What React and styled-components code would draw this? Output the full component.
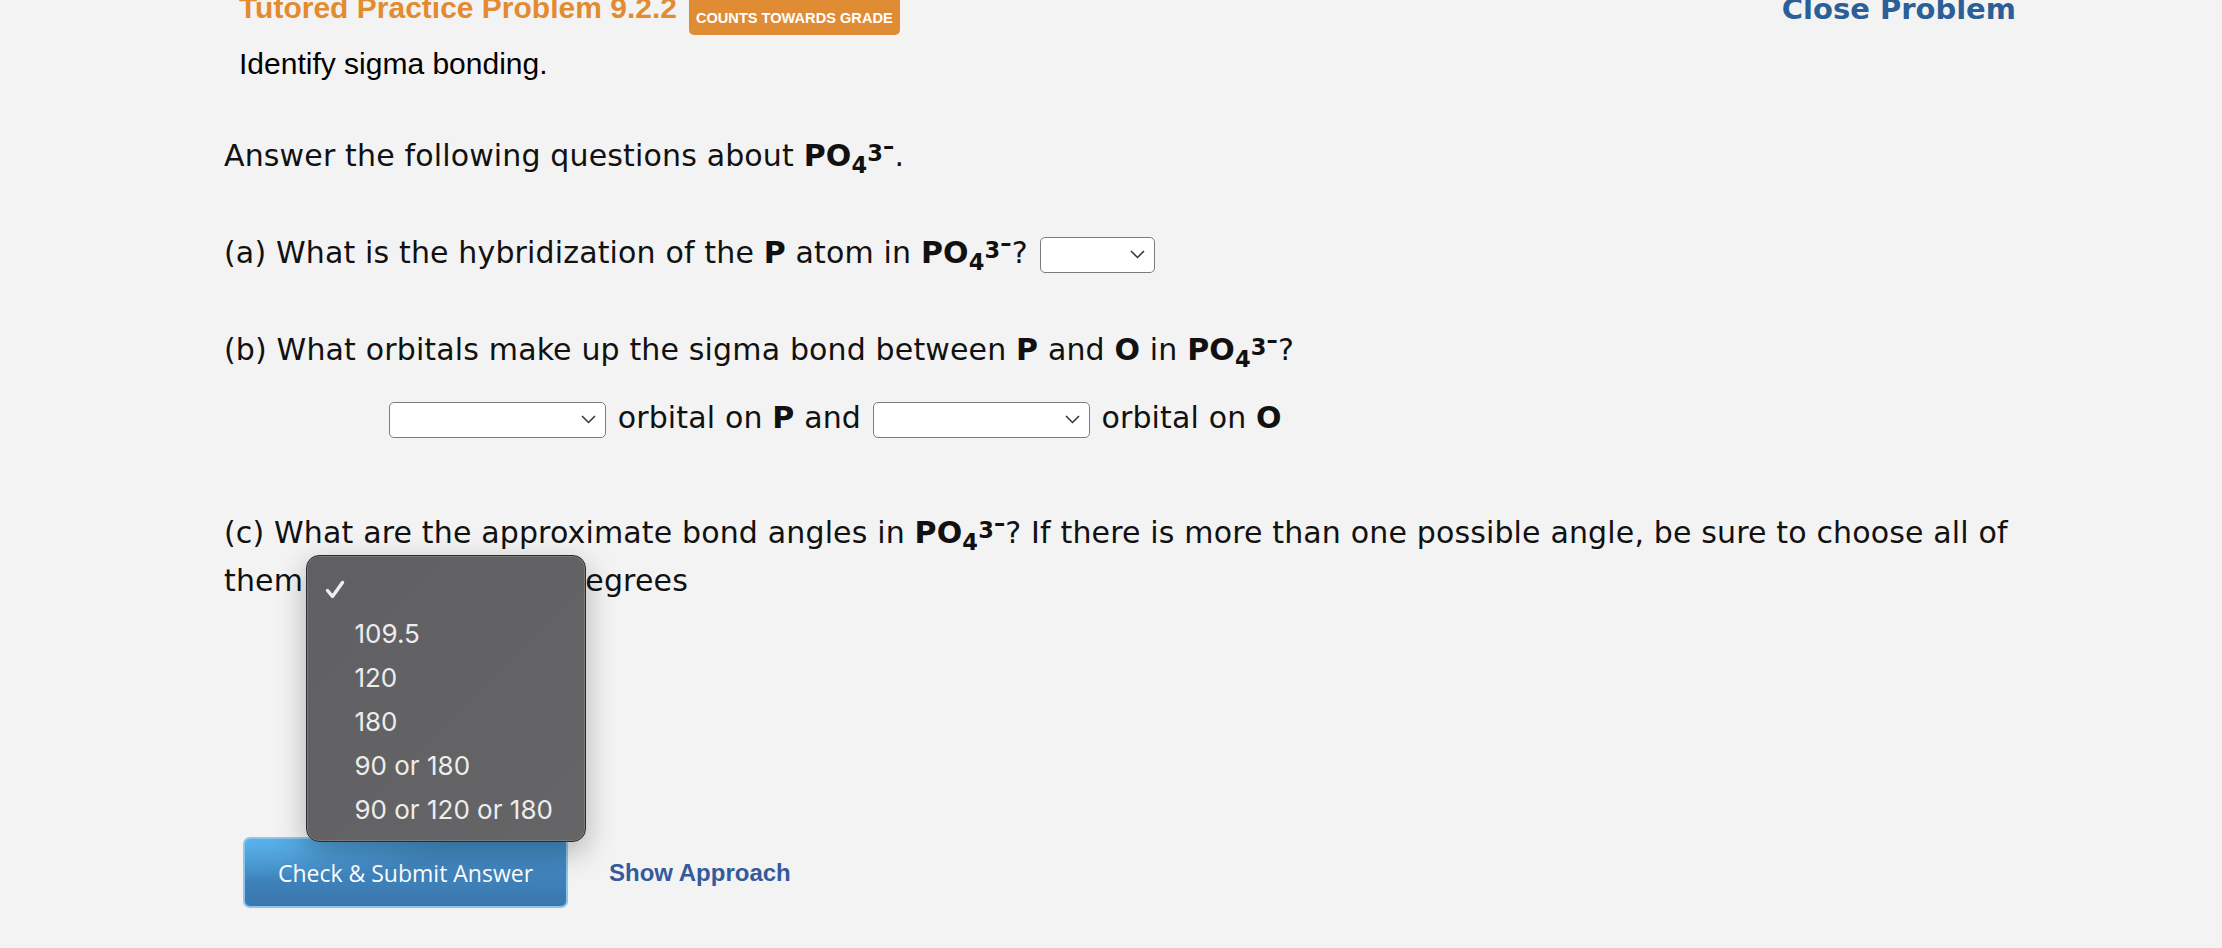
import styled, { createGlobalStyle } from "styled-components";

const GlobalStyle = createGlobalStyle`
  html, body {
    margin: 0;
    padding: 0;
    background: #f3f3f3;
    overflow: hidden;
  }
`;

const Page = styled.div`
  width: 1792px;
  height: 948px;
  padding-left: 224px;
  font-family: "DejaVu Sans", Verdana, sans-serif;
  color: #111;
`;

const Header = styled.header`
  display: flex;
  align-items: flex-start;
  height: 36px;
  padding-left: 15px;
`;

const Title = styled.h1`
  margin: -7px 0 0;
  font: bold 30px/30px "Liberation Sans", Arial, sans-serif;
  color: #e38b31;
`;

const Badge = styled.span`
  display: flex;
  align-items: center;
  height: 35px;
  margin-left: 12px;
  padding: 0 7px;
  background: #e08c35;
  border-radius: 0 0 5px 5px;
  color: #fff;
  font: bold 14.6px "Liberation Sans", Arial, sans-serif;
  text-transform: uppercase;
`;

const CloseLink = styled.a`
  margin-left: auto;
  margin-top: -4px;
  font: bold 29px/26px "DejaVu Sans", Verdana, sans-serif;
  color: #2b5f97;
  text-decoration: none;
`;

const Intro = styled.p`
  margin: 13px 0 0 15px;
  font: 30px/30px "Liberation Sans", Arial, sans-serif;
  color: #000;
`;

const Question = styled.p`
  margin: ${(p) => p.$gap}px 0 0;
  padding-left: ${(p) => p.$indent || 0}px;
  font-size: 30px;
  line-height: 48px;
  letter-spacing: 0.15px;
  white-space: nowrap;
`;

const Sub = styled.sub`
  font-size: 0.75em;
  vertical-align: baseline;
  position: relative;
  top: 0.3em;
  line-height: 0;
`;

const Sup = styled.sup`
  font-size: 0.75em;
  vertical-align: baseline;
  position: relative;
  top: -0.22em;
  line-height: 0;
`;

const Raised = styled.span`
  position: relative;
  top: -0.3em;
`;

const Dropdown = styled.span`
  position: relative;
  display: inline-flex;
  align-items: center;
  justify-content: flex-end;
  box-sizing: border-box;
  width: ${(p) => p.$w}px;
  height: 36px;
  margin: 0 2px;
  padding-right: 9px;
  background: #fff;
  border: 1.5px solid #7b7b7b;
  border-radius: 5px;
  vertical-align: middle;
  letter-spacing: 0;
`;

const Menu = styled.div`
  position: absolute;
  top: -11px;
  left: -19px;
  z-index: 10;
  box-sizing: border-box;
  width: 280px;
  padding: 12px 0 9px;
  background: linear-gradient(135deg, #606062, #656567);
  border: 1px solid #2c2c2e;
  border-radius: 13px;
  box-shadow: inset 0 0 0 1px rgba(255, 255, 255, 0.14), 0 10px 30px rgba(0, 0, 0, 0.28);
  font: 26px/44px Inter, "Noto Sans", sans-serif;
  color: #ededed;
  white-space: nowrap;
`;

const MenuItem = styled.div`
  display: grid;
  grid-template-columns: 47px 1fr;
  align-items: center;
  height: 44px;
`;

const CheckCell = styled.span`
  display: flex;
  padding-left: 18px;
`;

const Actions = styled.div`
  display: flex;
  align-items: center;
  gap: 41px;
  margin-top: 232px;
  padding-left: 19px;
`;

const SubmitButton = styled.button`
  box-sizing: border-box;
  width: 325px;
  height: 71px;
  border: 2px solid #8cc6ee;
  border-radius: 7px;
  background: radial-gradient(ellipse at top left, rgba(92, 182, 240, 0.9), rgba(92, 182, 240, 0) 45%),
    linear-gradient(#4692cd, #3a77ad);
  color: #fff;
  font: 23px "Open Sans", sans-serif;
  cursor: pointer;
`;

const ApproachLink = styled.a`
  font: bold 24px "Liberation Sans", Arial, sans-serif;
  color: #355a9b;
  text-decoration: none;
`;

const Chevron = () => (
  <svg width="15" height="9" viewBox="0 0 15 9">
    <polyline points="1,1 7.5,7.5 14,1" fill="none" stroke="#333" strokeWidth="1.5" />
  </svg>
);

const Check = () => (
  <svg width="20" height="19" viewBox="0 0 20 19">
    <polyline points="2.5,10.5 7.5,16.5 17.5,2.5" fill="none" stroke="#eeeeee" strokeWidth="3.4" strokeLinecap="round" strokeLinejoin="round" />
  </svg>
);

const Formula = () => (
  <b>
    PO<Sub>4</Sub>
    <Sup>
      3<Raised>–</Raised>
    </Sup>
  </b>
);

const angles = ["109.5", "120", "180", "90 or 180", "90 or 120 or 180"];

export default function App() {
  return (
    <Page>
      <GlobalStyle />
      <Header>
        <Title>Tutored Practice Problem 9.2.2</Title>
        <Badge>Counts towards grade</Badge>
        <CloseLink href="#">Close Problem</CloseLink>
      </Header>
      <Intro>Identify sigma bonding.</Intro>

      <Question $gap={53}>
        Answer the following questions about <Formula />.
      </Question>
      <Question $gap={49}>
        (a) What is the hybridization of the <b>P</b> atom in <Formula />?{" "}
        <Dropdown $w={115}>
          <Chevron />
        </Dropdown>
      </Question>
      <Question $gap={49}>
        (b) What orbitals make up the sigma bond between <b>P</b> and <b>O</b> in <Formula />?
      </Question>
      <Question $gap={20} $indent={163}>
        <Dropdown $w={217}>
          <Chevron />
        </Dropdown>{" "}
        orbital on <b>P</b> and{" "}
        <Dropdown $w={217}>
          <Chevron />
        </Dropdown>{" "}
        orbital on <b>O</b>
      </Question>
      <Question $gap={67}>
        (c) What are the approximate bond angles in <Formula />? If there is more than one possible angle, be sure to
        choose all of
        <br />
        them.{" "}
        <Dropdown $w={230}>
          <Chevron />
          <Menu>
            <MenuItem>
              <CheckCell>
                <Check />
              </CheckCell>
              <span />
            </MenuItem>
            {angles.map((a) => (
              <MenuItem key={a}>
                <span />
                <span>{a}</span>
              </MenuItem>
            ))}
          </Menu>
        </Dropdown>{" "}
        degrees
      </Question>

      <Actions>
        <SubmitButton>Check &amp; Submit Answer</SubmitButton>
        <ApproachLink href="#">Show Approach</ApproachLink>
      </Actions>
    </Page>
  );
}
